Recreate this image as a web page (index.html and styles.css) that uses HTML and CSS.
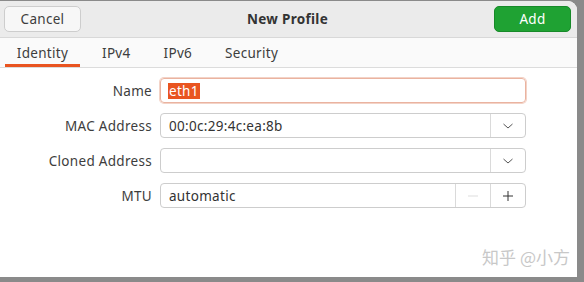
FILE: index.html
```html
<!DOCTYPE html>
<html lang="en">
<head>
    <meta charset="UTF-8">
    <title>New Profile</title>
    <link rel="stylesheet" href="styles.css">
</head>
<body>
    <div class="dialog">
        <div class="header">
            <button class="btn">Cancel</button>
            <div class="title">New Profile</div>
            <button class="btn btn-add">Add</button>
        </div>
        <div class="tabs">
            <div class="tab active">Identity</div>
            <div class="tab">IPv4</div>
            <div class="tab">IPv6</div>
            <div class="tab">Security</div>
        </div>
        <div class="content">
            <div class="row">
                <label class="label">Name</label>
                <div class="field focused"><span class="sel">eth1</span></div>
            </div>
            <div class="row">
                <label class="label">MAC Address</label>
                <div class="field combo">
                    <span class="value">00:0c:29:4c:ea:8b</span>
                    <span class="side-btn"><svg width="12" height="8" viewBox="0 0 12 8"><path d="M1.5 2 L6 6 L10.5 2" fill="none" stroke="#555" stroke-width="1"/></svg></span>
                </div>
            </div>
            <div class="row">
                <label class="label">Cloned Address</label>
                <div class="field combo">
                    <span class="value"></span>
                    <span class="side-btn"><svg width="12" height="8" viewBox="0 0 12 8"><path d="M1.5 2 L6 6 L10.5 2" fill="none" stroke="#555" stroke-width="1"/></svg></span>
                </div>
            </div>
            <div class="row">
                <label class="label">MTU</label>
                <div class="field combo">
                    <span class="value">automatic</span>
                    <span class="side-btn disabled"><svg width="12" height="12" viewBox="0 0 12 12"><path d="M1 6 H11" stroke="#ddd" stroke-width="1"/></svg></span>
                    <span class="side-btn"><svg width="12" height="12" viewBox="0 0 12 12"><path d="M1 6 H11 M6 1 V11" stroke="#333" stroke-width="1"/></svg></span>
                </div>
            </div>
        </div>
        <div class="watermark">知乎 @小方</div>
    </div>
</body>
</html>
```

FILE: styles.css
```css
body {
    margin: 0;
    width: 584px;
    height: 282px;
    background-color: #8a8a8a;
    font-family: "Noto Sans", sans-serif;
    font-size: 13.5px;
    letter-spacing: 0.3px;
    color: #3d3d3d;
    overflow: hidden;
    display: flex;
    align-items: flex-start;
}
.dialog {
    width: 577px;
    height: 276px;
    margin-top: 1px;
    background-color: white;
    border-top-right-radius: 9px;
    display: flex;
    flex-direction: column;
}
.header {
    height: 36px;
    background-color: #ebebeb;
    border-bottom: 1px solid #d8d8d8;
    border-top-right-radius: 9px;
    display: flex;
    align-items: center;
    padding: 0 6px 0 4px;
}
.btn {
    width: 77px;
    height: 26px;
    font-family: inherit;
    font-size: 13.5px;
    letter-spacing: 0.3px;
    color: #3d3d3d;
    background-color: #f7f7f7;
    border: 1px solid #cdcdcd;
    border-radius: 5px;
}
.btn-add {
    background-color: #1fa233;
    border-color: #178a29;
    color: white;
}
.title {
    flex: 1;
    text-align: center;
    font-weight: bold;
    color: #333;
}
.tabs {
    height: 29px;
    background-color: #fafafa;
    border-bottom: 1px solid #dcdcdc;
    display: flex;
    padding-left: 5px;
}
.tab {
    padding: 0 16.5px;
    display: flex;
    align-items: center;
    justify-content: center;
    color: #3d3d3d;
}
.tab.active {
    width: 49px;
    padding: 3px 13px 0;
    margin-right: 5.5px;
    border-bottom: 3px solid #e95420;
}
.content {
    flex: 1;
    display: flex;
    flex-direction: column;
    gap: 10px;
    padding-top: 10px;
}
.row {
    display: flex;
    align-items: center;
    gap: 8px;
}
.label {
    width: 152px;
    text-align: right;
}
.field {
    width: 364px;
    height: 23px;
    border: 1px solid #cdcdcd;
    border-radius: 4px;
    display: flex;
    align-items: center;
    color: #333;
}
.field.focused {
    border-color: #eab3a0;
    box-shadow: 0 0 0 1px #f3d3c7;
    padding-left: 7px;
    width: 357px;
}
.sel {
    background-color: #e95420;
    color: white;
    padding: 0 1px;
    line-height: 16px;
}
.value {
    flex: 1;
    padding-left: 8px;
}
.side-btn {
    width: 34px;
    height: 100%;
    border-left: 1px solid #dadada;
    display: flex;
    align-items: center;
    justify-content: center;
}
.watermark {
    align-self: flex-end;
    margin: 0 7px 8px 0;
    font-family: "Noto Sans CJK SC", sans-serif;
    font-size: 17px;
    letter-spacing: 0;
    color: #c8c8c8;
}
```
